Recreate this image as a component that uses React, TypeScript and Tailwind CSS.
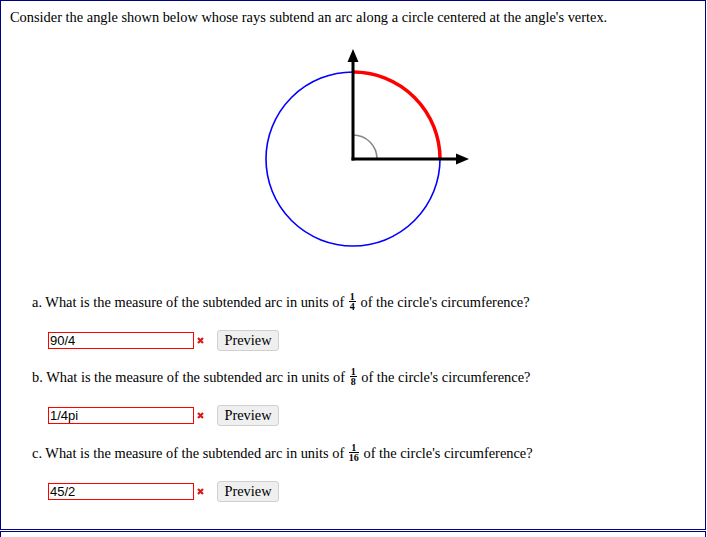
import React from "react";

const serif = { fontFamily: '"Liberation Serif", "Times New Roman", serif' };

function Frac({ d }: { d: string }) {
  return (
    <span className="inline-block align-[-3px] mx-[1px] text-center text-[10px] font-bold">
      <span className="block px-[1px] border-b border-black leading-[9px]">1</span>
      <span className="block leading-[9px]">{d}</span>
    </span>
  );
}

function RedX() {
  return (
    <svg width="7" height="7" viewBox="0 0 7 7" className="ml-[3px]">
      <path d="M1 1 L6 6 M6 1 L1 6" stroke="#dc1a1a" strokeWidth="2.2" />
    </svg>
  );
}

function Question({ label, d, value, gap }: { label: string; d: string; value: string; gap: string }) {
  return (
    <div className={gap}>
      <p className="h-[20px] pl-[31px] text-[14.4px] leading-[20px] text-black" style={serif}>
        {label}. What is the measure of the subtended arc in units of{" "}
        <Frac d={d} />{" "}
        of the circle's circumference?
      </p>
      <div className="mt-[18px] pl-[47px] flex items-center h-[21px]">
        <div
          className="w-[146px] h-[17px] border border-[#ff0000] flex items-center pl-[1px] text-[13px] leading-[15px] text-black"
          style={{ fontFamily: '"Liberation Sans", Arial, sans-serif' }}
        >
          {value}
        </div>
        <RedX />
        <button
          className="ml-[13px] h-[21px] w-[62px] rounded-[3px] border border-[#d0d0d0] bg-[#efefef] text-[14.4px] leading-[19px] text-black"
          style={serif}
        >
          Preview
        </button>
      </div>
    </div>
  );
}

export default function App() {
  return (
    <div className="w-[707px] h-[537px] bg-white overflow-hidden">
      <div className="w-[706px] h-[530px] border border-[#000080]">
        <p className="pt-[8px] pl-[9px] text-[14.4px] leading-[17px] text-black" style={serif}>
          Consider the angle shown below whose rays subtend an arc along a circle centered at the angle's vertex.
        </p>
        <div className="mt-[18px] flex justify-center">
          <svg width="240" height="210" viewBox="0 0 240 210">
            <circle cx="120" cy="115" r="87" fill="none" stroke="#0000ff" strokeWidth="1.6" />
            <path d="M120 28 A87 87 0 0 1 207 115" fill="none" stroke="#ff0000" strokeWidth="3.5" />
            <path d="M144 115 A24 24 0 0 0 120 91" fill="none" stroke="#888888" strokeWidth="1.6" />
            <line x1="120" y1="116.5" x2="120" y2="17" stroke="#000" strokeWidth="3" />
            <line x1="118.5" y1="115" x2="226" y2="115" stroke="#000" strokeWidth="3" />
            <polygon points="120,5 114.5,18 125.5,18" fill="#000" />
            <polygon points="236,115 223,109.5 223,120.5" fill="#000" />
          </svg>
        </div>
        <Question label="a" d="4" value="90/4" gap="mt-[38px]" />
        <Question label="b" d="8" value="1/4pi" gap="mt-[16px]" />
        <Question label="c" d="16" value="45/2" gap="mt-[17px]" />
      </div>
      <div className="mt-[1px] w-[706px] h-[20px] border border-[#000080]"></div>
    </div>
  );
}
